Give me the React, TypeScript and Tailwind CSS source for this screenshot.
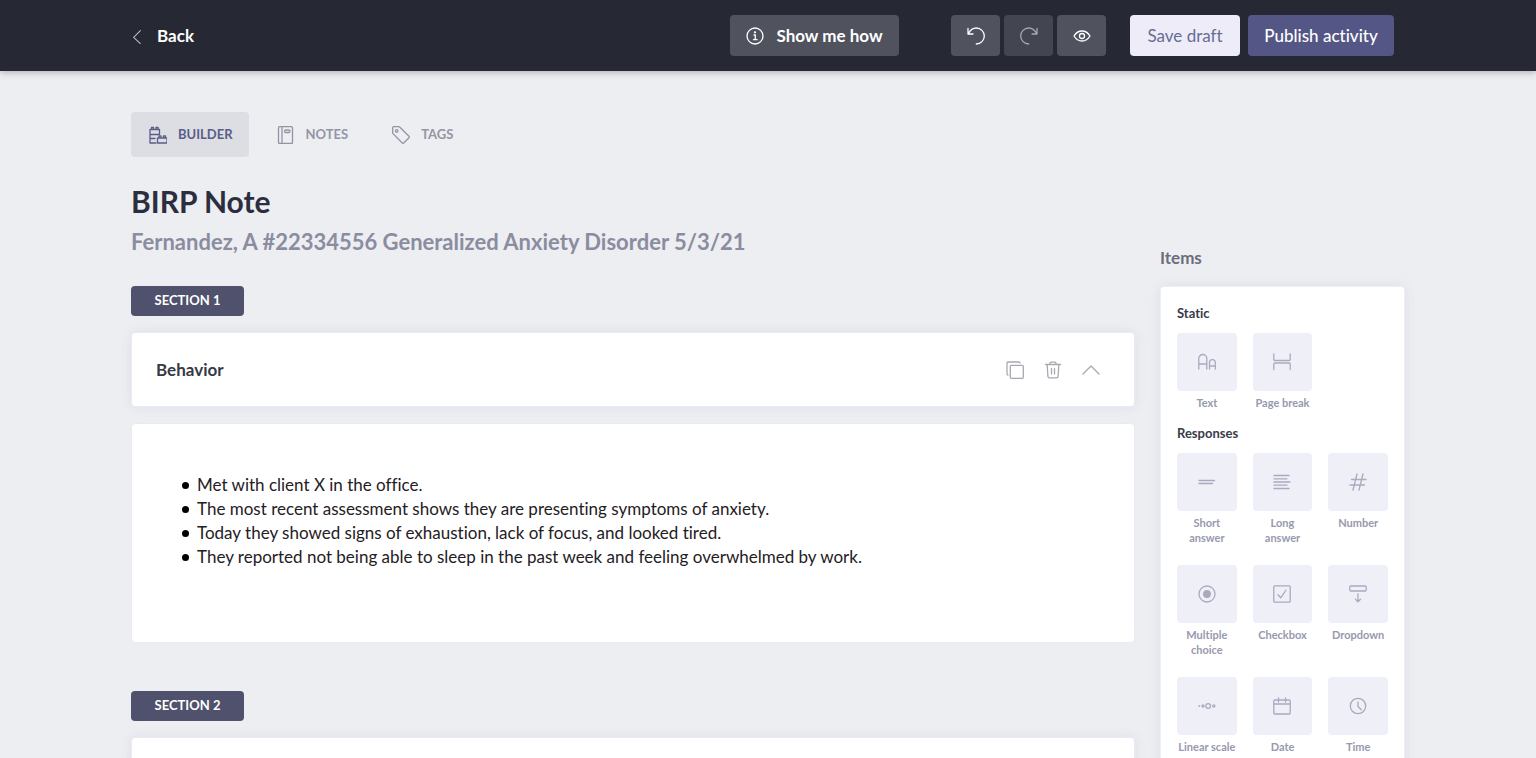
import type { ReactNode } from 'react';

type IconProps = {
  children: ReactNode;
  className?: string;
};

// All line icons share an 18px grid and a thin stroke.
function Icon({ children, className = 'size-[18px]' }: IconProps) {
  return (
    <svg
      viewBox="0 0 18 18"
      fill="none"
      stroke="currentColor"
      strokeWidth="1.3"
      strokeLinecap="round"
      strokeLinejoin="round"
      aria-hidden="true"
      className={`shrink-0 ${className}`}
    >
      {children}
    </svg>
  );
}

const TABS = [
  {
    name: 'Builder',
    active: true,
    icon: (
      <>
        <path d="M1 3.5h9.500v5H1zM1 8.500V17h6M1 12.500h5M2.500 3.500v-2h2v2M7 3.500v-2h2v2" />
        <path d="M8.500 12H18v5H8.500zM10 12v-2h2v2M14.500 12v-2h2v2" />
      </>
    ),
  },
  {
    name: 'Notes',
    active: false,
    icon: (
      <>
        <rect x="1.500" y=".7" width="14" height="16.800" rx="1" />
        <path d="M5 .7v16.800" />
        <rect x="7.500" y="4" width="5.500" height="2.500" rx="1.200" />
      </>
    ),
  },
  {
    name: 'Tags',
    active: false,
    icon: (
      <>
        <path d="M1.700.7h5c.5 0 .9.200 1.200.5l9.100 9.100c.4.400.4 1 0 1.400l-5.300 5.300c-.4.4-1 .4-1.400 0L1.200 7.900a1.800 1.800 0 0 1-.5-1.200v-5c0-.6.4-1 1-1Z" />
        <circle cx="4.700" cy="4.900" r="1.200" />
      </>
    ),
  },
];

const STATIC_ITEMS = [
  {
    name: 'Text',
    icon: (
      <>
        <path d="M.8 16V5.500a4 4 0 0 1 8 0V16M.8 11h8" />
        <path d="M11.500 16V9.500a2.900 2.900 0 0 1 5.800 0V16M11.500 13h5.800" />
      </>
    ),
  },
  {
    name: 'Page break',
    icon: (
      <path d="M.8 1v5.500c0 .6.4 1 1 1h14.400c.6 0 1-.4 1-1V1M.8 16.500V11c0-.6.4-1 1-1h14.400c.6 0 1 .4 1 1v5.500" />
    ),
  },
];

const RESPONSE_ITEMS = [
  { name: 'Short answer', icon: <path d="M1 7.500h15.500M1 10.500h13.500" /> },
  { name: 'Long answer', icon: <path d="M1 2.500h15M1 5.800h13M1 9h16M1 12.200h13M1 15.500h15" /> },
  { name: 'Number', icon: <path d="M8 1 4 17M14 1l-4 16M2.500 6.500H17M1 12h14.500" /> },
  {
    name: 'Multiple choice',
    icon: (
      <>
        <circle cx="9" cy="9" r="8" />
        <circle cx="9" cy="9" r="3.300" fill="currentColor" />
      </>
    ),
  },
  {
    name: 'Checkbox',
    icon: (
      <>
        <rect x=".8" y=".8" width="16.400" height="16.400" rx="1" />
        <path d="m5 9.800 2.800 3L13 5" />
      </>
    ),
  },
  {
    name: 'Dropdown',
    icon: (
      <>
        <rect x=".8" y="1" width="16.400" height="5" rx="1" />
        <path d="M9 9v7.500M6.500 14.200 9 16.700l2.500-2.500" />
      </>
    ),
  },
  {
    name: 'Linear scale',
    icon: (
      <>
        <circle cx="1.300" cy="9" r=".3" />
        <circle cx="5" cy="9" r="1" />
        <circle cx="10.200" cy="9" r="2.300" />
        <circle cx="15.800" cy="9" r="1.100" />
      </>
    ),
  },
  {
    name: 'Date',
    icon: (
      <>
        <rect x=".8" y="3" width="16.400" height="14" rx="1" />
        <path d="M.8 7h16.400M5.500.8V5M12.500.8V5" />
      </>
    ),
  },
  {
    name: 'Time',
    icon: (
      <>
        <circle cx="9" cy="9" r="7.700" />
        <path d="M9 5v4.500l3.200 3.200" />
      </>
    ),
  },
];

const BEHAVIOR_NOTES = [
  'Met with client X in the office.',
  'The most recent assessment shows they are presenting symptoms of anxiety.',
  'Today they showed signs of exhaustion, lack of focus, and looked tired.',
  'They reported not being able to sleep in the past week and feeling overwhelmed by work.',
];

function TopBar() {
  return (
    <header className="relative z-10 flex h-[71px] shrink-0 items-center justify-between bg-[#262833] pr-[142px] pl-[131px] shadow-[0_1px_7px_rgba(38,40,51,0.35)]">
      <a href="#back" className="flex items-center gap-2.5 text-[17px] font-bold text-white">
        <Icon className="size-4 text-[#b4b5c4]">
          <path d="M10.500 3 3 10.500l7.500 7" />
        </Icon>
        Back
      </a>
      <div className="flex h-[41px] items-stretch">
        <button
          type="button"
          className="mr-[52px] flex w-[169px] items-center justify-center gap-3 rounded bg-[#50525e] text-[17px] font-bold text-white"
        >
          <Icon>
            <circle cx="9" cy="9" r="8" />
            <path d="M8 8h1.300v4.500M7.500 12.700h3.500" />
            <circle cx="9" cy="5.300" r=".5" fill="currentColor" />
          </Icon>
          Show me how
        </button>
        <div className="mr-6 flex gap-1">
          <button type="button" aria-label="Undo" className="flex w-[49px] items-center justify-center rounded bg-[#50525e] text-white">
            <Icon>
              <path d="M1 1.500v5.500h5M1.300 6.700C3.200 3 5.800 1 9.300 1a8 8 0 0 1 0 16" />
            </Icon>
          </button>
          <button type="button" aria-label="Redo" className="flex w-[49px] items-center justify-center rounded bg-[#434550] text-[#a7a8b2]">
            <Icon>
              <path d="M17 1.500v5.500h-5M16.700 6.700C14.800 3 12.200 1 8.700 1a8 8 0 0 0 0 16" />
            </Icon>
          </button>
          <button type="button" aria-label="Preview" className="flex w-[49px] items-center justify-center rounded bg-[#50525e] text-white">
            <Icon>
              <path d="M1 9c2-3.300 4.800-5 8-5s6 1.700 8 5c-2 3.300-4.800 5-8 5s-6-1.700-8-5Z" />
              <circle cx="9" cy="9" r="2.500" />
            </Icon>
          </button>
        </div>
        <button type="button" className="mr-2 w-[110px] rounded bg-[#edecf8] text-[17px] text-[#676d94]">
          Save draft
        </button>
        <button type="button" className="w-[146px] rounded bg-[#545685] text-[17px] font-medium text-white">
          Publish activity
        </button>
      </div>
    </header>
  );
}

function Tabs() {
  return (
    <nav className="flex h-[45px] gap-3">
      {TABS.map((tab) => (
        <button
          key={tab.name}
          type="button"
          className={`flex items-center gap-[11px] rounded text-[13px] font-bold uppercase ${
            tab.active ? 'bg-[#dddee3] pr-4 pl-[18px] text-[#5a5d88]' : 'px-4 text-[#9495a4]'
          }`}
        >
          <Icon>{tab.icon}</Icon>
          {tab.name}
        </button>
      ))}
    </nav>
  );
}

function SectionBadge({ label }: { label: string }) {
  return (
    <h2 className="flex h-[30px] w-[113px] items-center justify-center rounded bg-[#4f516d] text-[13px] font-bold text-white">
      {label}
    </h2>
  );
}

function ItemGrid({ items }: { items: { name: string; icon: ReactNode }[] }) {
  return (
    <div className="grid grid-cols-3 gap-x-4 gap-y-5">
      {items.map((item) => (
        <button key={item.name} type="button" className="flex flex-col items-center gap-1 text-[#9799ae]">
          <span className="flex h-[58px] w-full items-center justify-center rounded bg-[#efeff8]">
            <Icon className="size-[18px] text-[#a9aabd]">{item.icon}</Icon>
          </span>
          <span className="text-[11px] leading-[15px] font-bold">{item.name}</span>
        </button>
      ))}
    </div>
  );
}

function ItemsPanel() {
  return (
    <aside className="w-[245px] shrink-0 pt-[134px]">
      <h2 className="text-[17px] leading-6 font-bold text-[#6b6d7c]">Items</h2>
      <div className="mt-4 rounded border border-[#eeeef6] bg-white px-4 pt-4 pb-8 shadow-[0_0_12px_rgba(80,82,120,0.09)]">
        <h3 className="mb-2.5 text-[13px] leading-5 font-bold text-[#393b49]">Static</h3>
        <ItemGrid items={STATIC_ITEMS} />
        <h3 className="mt-[13px] mb-2.5 text-[13px] leading-5 font-bold text-[#393b49]">Responses</h3>
        <ItemGrid items={RESPONSE_ITEMS} />
      </div>
    </aside>
  );
}

export default function App() {
  return (
    <div className="flex h-screen flex-col bg-[#edeef2] font-['Lato',sans-serif] [font-variant-ligatures:none]">
      <TopBar />
      <div className="flex flex-1 items-start gap-[25px] overflow-y-auto px-[131px] pt-[41px] [scrollbar-width:none]">
        <main className="min-w-0 flex-1 pb-10">
          <Tabs />
          <h1 className="mt-6 text-[30px] leading-10 font-bold text-[#2c2e40]">BIRP Note</h1>
          <p className="mt-[7px] text-[22px] leading-7 font-bold text-[#8b8ca0]">
            Fernandez, A #22334556 Generalized Anxiety Disorder 5/3/21
          </p>

          <section className="mt-[30px]">
            <SectionBadge label="SECTION 1" />
            <div className="mt-4 flex h-[75px] items-center justify-between rounded border border-[#eaeaf4] bg-white pr-[34px] pl-6 shadow-[0_0_12px_rgba(80,82,120,0.09)]">
              <h3 className="text-[17px] font-bold text-[#373946]">Behavior</h3>
              <div className="flex gap-5 text-[#a8a8b0]">
                <button type="button" aria-label="Duplicate section">
                  <Icon>
                    <rect x="4.300" y="4.300" width="13" height="13" rx="1" />
                    <path d="M2 14c-.7 0-1-.4-1-1V2c0-.7.4-1 1-1h11c.6 0 1 .3 1 1" />
                  </Icon>
                </button>
                <button type="button" aria-label="Delete section">
                  <Icon>
                    <path d="M1.500 3.500h15M6 3.500V2.300c0-.7.4-1.100 1.100-1.100h3.800c.7 0 1.100.4 1.100 1.100v1.200M3.200 3.500l.7 11.900c.1.900.6 1.400 1.500 1.400h7.200c.9 0 1.400-.5 1.500-1.400l.7-11.900M7.500 7.500v5.500M10.500 7.500v5.500" />
                  </Icon>
                </button>
                <button type="button" aria-label="Collapse section">
                  <Icon>
                    <path d="m1 13 8-8 8 8" />
                  </Icon>
                </button>
              </div>
            </div>
            <div className="mt-4 min-h-[220px] rounded border border-[#eaeaf4] bg-white px-12 pt-[49px] pb-12">
              <ul className="text-[17px] leading-6 text-[#1f2024]">
                {BEHAVIOR_NOTES.map((note) => (
                  <li key={note} className="flex items-start gap-2">
                    <span className="mt-[9px] ml-0.5 size-[7px] shrink-0 rounded-full bg-black" />
                    {note}
                  </li>
                ))}
              </ul>
            </div>
          </section>

          <section className="mt-12">
            <SectionBadge label="SECTION 2" />
            <div className="mt-4 h-[75px] rounded border border-[#eaeaf4] bg-white shadow-[0_0_12px_rgba(80,82,120,0.09)]" />
          </section>
        </main>
        <ItemsPanel />
      </div>
    </div>
  );
}
